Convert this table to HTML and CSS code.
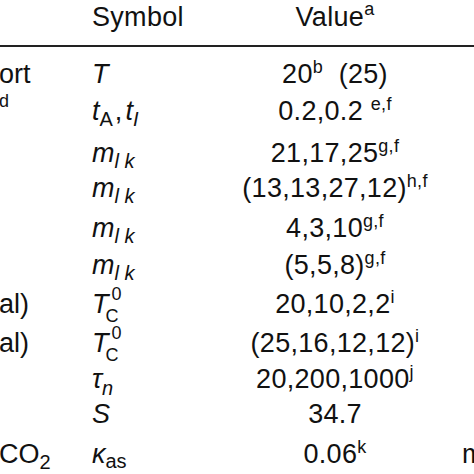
FILE: index.html
```html
<!DOCTYPE html>
<html lang="en">
<head>
<meta charset="utf-8">
<title>Parameters</title>
<link rel="stylesheet" href="styles.css">
</head>
<body>
<div class="table">
  <div class="row head">
    <div class="c-label"></div>
    <div class="c-sym">Symbol</div>
    <div class="c-val">Value<sup class="hsup">a</sup></div>
    <div class="c-unit"></div>
  </div>
  <div class="body">
    <div class="row r1">
      <div class="c-label">ort</div>
      <div class="c-sym"><i>T</i></div>
      <div class="c-val">20<sup>b</sup>&nbsp; (25)</div>
      <div class="c-unit"></div>
    </div>
    <div class="row r2">
      <div class="c-label"><span class="note">d</span></div>
      <div class="c-sym"><i>t</i><sub>A</sub><span class="comma">,</span><i>t</i><sub><i>I</i></sub></div>
      <div class="c-val">0.2,0.2 <sup>e,f</sup></div>
      <div class="c-unit"></div>
    </div>
    <div class="row r3">
      <div class="c-label"></div>
      <div class="c-sym"><i>m</i><sub><i>l k</i></sub></div>
      <div class="c-val">21,17,25<sup>g,f</sup></div>
      <div class="c-unit"></div>
    </div>
    <div class="row r4">
      <div class="c-label"></div>
      <div class="c-sym"><i>m</i><sub><i>l k</i></sub></div>
      <div class="c-val">(13,13,27,12)<sup>h,f</sup></div>
      <div class="c-unit"></div>
    </div>
    <div class="row r5">
      <div class="c-label"></div>
      <div class="c-sym"><i>m</i><sub><i>l k</i></sub></div>
      <div class="c-val">4,3,10<sup>g,f</sup></div>
      <div class="c-unit"></div>
    </div>
    <div class="row r6">
      <div class="c-label"></div>
      <div class="c-sym"><i>m</i><sub><i>l k</i></sub></div>
      <div class="c-val">(5,5,8)<sup>g,f</sup></div>
      <div class="c-unit"></div>
    </div>
    <div class="row r7">
      <div class="c-label">al)</div>
      <div class="c-sym"><i>T</i><span class="stack"><span class="st-sup">0</span><span>C</span></span></div>
      <div class="c-val">20,10,2,2<sup>i</sup></div>
      <div class="c-unit"></div>
    </div>
    <div class="row r8">
      <div class="c-label">al)</div>
      <div class="c-sym"><i>T</i><span class="stack"><span class="st-sup">0</span><span>C</span></span></div>
      <div class="c-val">(25,16,12,12)<sup>i</sup></div>
      <div class="c-unit"></div>
    </div>
    <div class="row r9">
      <div class="c-label"></div>
      <div class="c-sym"><i>τ</i><sub class="low"><i>n</i></sub></div>
      <div class="c-val">20,200,1000<sup>j</sup></div>
      <div class="c-unit"></div>
    </div>
    <div class="row r10">
      <div class="c-label"></div>
      <div class="c-sym"><i>S</i></div>
      <div class="c-val">34.7</div>
      <div class="c-unit"></div>
    </div>
    <div class="row r11">
      <div class="c-label">CO<sub>2</sub></div>
      <div class="c-sym"><i>κ</i><sub class="high">as</sub></div>
      <div class="c-val">0.06<sup>k</sup></div>
      <div class="c-unit">m</div>
    </div>
  </div>
</div>
</body>
</html>
```

FILE: styles.css
```css
html, body {
  margin: 0;
  padding: 0;
  background: #ffffff;
}
body {
  width: 474px;
  height: 474px;
  overflow: hidden;
  font-family: "Liberation Sans", Arial, Helvetica, sans-serif;
  font-size: 27px;
  color: #111111;
}
.table {
  width: 474px;
}
.row {
  display: grid;
  grid-template-columns: 92px 118px 250px 1fr;
  line-height: 30px;
  white-space: nowrap;
  box-sizing: border-box;
}
.c-label {
  margin-left: -1px;
}
.c-val {
  text-align: center;
  letter-spacing: 0.3px;
}
.c-unit {
  padding-left: 2px;
  overflow: hidden;
}
.head {
  padding-top: 2px;
  padding-bottom: 13px;
  border-bottom: 2px solid #222222;
}
.head .c-sym {
  letter-spacing: 0.3px;
}
.body {
  padding-top: 9px;
}
.body .row {
  padding-top: 3px;
}
.r1 { height: 37px; }
.r2 { height: 42px; }
.r3 { height: 35px; }
.r4 { height: 40px; }
.r5 { height: 37px; }
.r6 { height: 39px; }
.r7 { height: 39px; }
.r8 { height: 36px; }
.r9 { height: 35px; }
.r10 { height: 40px; }
.r11 { height: 38px; }
sup {
  font-size: 18px;
  line-height: 0;
  vertical-align: 10px;
}
.hsup {
  vertical-align: 11px;
}
sub {
  font-size: 20px;
  line-height: 0;
  vertical-align: -6px;
}
sub.low {
  vertical-align: -7px;
}
sub.high {
  vertical-align: -5px;
}
.comma {
  margin: 0 3px 0 2px;
}
.note {
  font-size: 18px;
  vertical-align: 13px;
  line-height: 0;
}
.stack {
  display: inline-flex;
  flex-direction: column;
  align-items: flex-start;
  font-size: 18px;
  line-height: 22px;
  vertical-align: 13px;
  margin: -22px 0 -22px -3px;
}
.st-sup {
  padding-left: 6px;
}
i {
  font-style: italic;
}
```
